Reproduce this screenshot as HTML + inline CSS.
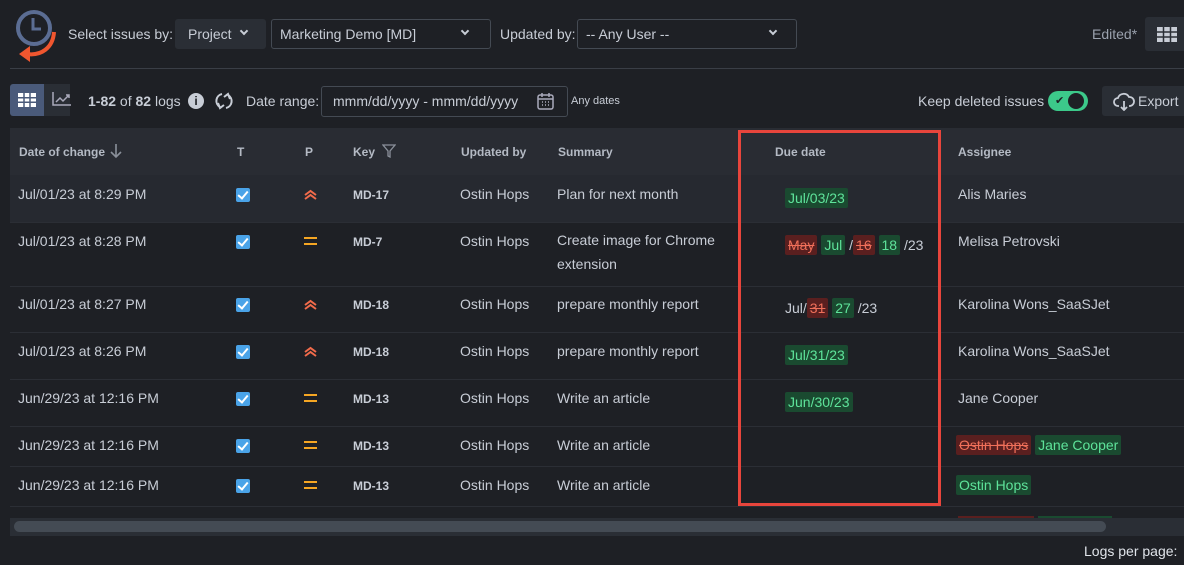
<!DOCTYPE html>
<html><head><meta charset="utf-8"><style>
*{box-sizing:border-box;margin:0;padding:0}
body{width:1184px;height:565px;background:#1e2025;font-family:"Liberation Sans",sans-serif;color:#c8cdd6;font-size:14px;position:relative;overflow:hidden}
.a{position:absolute;white-space:nowrap}
.sel{position:absolute;border:1px solid #444a53;border-radius:3px;height:30px;padding:6px 8px;font-size:14px;color:#c8cdd6}
.chev{position:absolute;right:10px;top:8px;width:6px;height:6px;border-right:2px solid #c8cdd6;border-bottom:2px solid #c8cdd6;transform:rotate(45deg)}
.row{position:absolute;left:10px;width:1174px;border-top:1px solid #2b2e35}
.h{font-size:12px;font-weight:bold;color:#b4bac4}
.cb{position:absolute;width:14px;height:14px;background:#4aa3e8;border-radius:2px}
.cb:after{content:"";position:absolute;left:4px;top:1px;width:4px;height:8px;border-right:2px solid #fff;border-bottom:2px solid #fff;transform:rotate(40deg)}
.eq{position:absolute;width:13px;height:8px;border-top:2px solid #f5a623;border-bottom:2px solid #f5a623}
.hi{position:absolute}
.key{font-size:12px;font-weight:bold;color:#c8cdd6}
.g{background:#1a4a30;color:#5ee39a;padding:2px 3px;border-radius:2px}
.r{background:#5a1f1f;color:#f0705a;padding:2px 3px;border-radius:2px;text-decoration:line-through}
</style></head><body>
<svg class="a" style="left:13px;top:8px" width="46" height="54" viewBox="0 0 46 54"><circle cx="21" cy="20" r="16" fill="none" stroke="#5b6d93" stroke-width="4"/><path d="M20 10v11h8" fill="none" stroke="#5b6d93" stroke-width="3"/><path d="M41 24 C40 40 28 48 14 46" fill="none" stroke="#f0562f" stroke-width="4"/><path d="M6 46 L17 38 L17 54 Z" fill="#f0562f"/></svg>
<div class="a" style="left:68px;top:26px">Select issues by:</div>
<div class="sel" style="left:175px;top:19px;width:91px;background:#2a2e35;border-color:#2a2e35;padding-left:12px">Project<span class="chev" style="right:18px"></span></div>
<div class="sel" style="left:271px;top:19px;width:220px">Marketing Demo [MD]<span class="chev" style="right:22px"></span></div>
<div class="a" style="left:500px;top:26px">Updated by:</div>
<div class="sel" style="left:577px;top:19px;width:220px">-- Any User --<span class="chev" style="right:20px"></span></div>
<div class="a" style="left:1092px;top:26px;color:#9aa1ad">Edited*</div>
<div class="a" style="left:1145px;top:17px;width:45px;height:34px;background:#2a2e35;border-radius:3px"></div>
<svg class="a" style="left:1157px;top:27px" width="20" height="15"><rect x="0" y="0" width="20" height="15" fill="#c8cdd6"/><path d="M0 5h20M0 10h20M6.5 0v15M13.5 0v15" stroke="#2a2e35" stroke-width="1.5"/></svg>
<div class="a" style="left:10px;top:68px;width:1174px;height:1px;background:#3a3e46"></div>
<div class="a" style="left:10px;top:84px;width:34px;height:32px;background:#4a5a7a;border-radius:3px 0 0 3px"></div>
<svg class="a" style="left:18px;top:93px" width="18" height="14"><rect width="18" height="14" fill="#fff"/><path d="M0 4.7h18M0 9.3h18M6 0v14M12 0v14" stroke="#4a5a7a" stroke-width="1.5"/></svg>
<div class="a" style="left:44px;top:84px;width:26px;height:32px;background:#2a2e35"></div>
<svg class="a" style="left:52px;top:91px" width="20" height="16"><path d="M1 1v13h18" fill="none" stroke="#aab" stroke-width="1.5"/><path d="M4 11l4-4 3 3 6-6M14 4h3v3" fill="none" stroke="#aab" stroke-width="1.5"/></svg>
<div class="a" style="left:88px;top:93px"><b>1-82</b> of <b>82</b> logs</div>
<div class="a" style="left:188px;top:93px;width:16px;height:16px;border-radius:50%;background:#c8cdd6;color:#1e2025;font-size:12px;font-weight:bold;text-align:center;line-height:16px">i</div>
<svg class="a" style="left:215px;top:91px" width="18" height="20"><path d="M7 3A7 7 0 0 0 5 16M11 17A7 7 0 0 0 13 4" fill="none" stroke="#c8cdd6" stroke-width="2"/><path d="M3 12l2 5 4-3M15 8l-2-5-4 3" fill="none" stroke="#c8cdd6" stroke-width="2"/></svg>
<div class="a" style="left:246px;top:93px">Date range:</div>
<div class="sel" style="left:321px;top:86px;width:247px;height:31px;padding:6px 11px">mmm/dd/yyyy - mmm/dd/yyyy</div>
<svg class="a" style="left:537px;top:92px" width="17" height="18"><rect x="1" y="3" width="15" height="14" rx="2" fill="none" stroke="#aab" stroke-width="1.5"/><path d="M1 7h15M5 1v4M12 1v4" stroke="#aab" stroke-width="1.5"/><path d="M5 10h1M8 10h1M11 10h1M5 13h1M8 13h1M11 13h1" stroke="#aab" stroke-width="1.5"/></svg>
<div class="a" style="left:571px;top:95px;font-size:11px">Any dates</div>
<div class="a" style="left:918px;top:93px">Keep deleted issues</div>
<div class="a" style="left:1048px;top:91px;width:40px;height:20px;background:#3cc98a;border-radius:10px"></div>
<div class="a" style="left:1068px;top:93px;width:16px;height:16px;background:#1e2025;border-radius:50%"></div>
<div class="a" style="left:1055px;top:94px;font-size:11px;color:#1e2025">✔</div>
<div class="a" style="left:1102px;top:86px;width:90px;height:30px;background:#2a2e35;border-radius:3px"></div>
<svg class="a" style="left:1113px;top:92px" width="22" height="19"><path d="M6 14H5a4 4 0 0 1 0-8 6 6 0 0 1 11-1 4.5 4.5 0 0 1 1 9h-1" fill="none" stroke="#c8cdd6" stroke-width="1.8"/><path d="M11 9v9M8 15l3 3 3-3" fill="none" stroke="#c8cdd6" stroke-width="1.8"/></svg>
<div class="a" style="left:1138px;top:93px">Export</div>
<div class="a" style="left:10px;top:128px;width:1174px;height:47px;background:#292c33"></div>
<div class="a" style="left:10px;top:175px;width:1174px;height:47px;background:#262930"></div>
<div class="a h" style="left:19px;top:145px">Date of change</div>
<svg class="a" style="left:110px;top:143px" width="12" height="16"><path d="M6 1v13M1 9l5 5 5-5" fill="none" stroke="#8a909a" stroke-width="1.6"/></svg>
<div class="a h" style="left:237px;top:145px">T</div>
<div class="a h" style="left:305px;top:145px">P</div>
<div class="a h" style="left:353px;top:145px">Key</div>
<svg class="a" style="left:382px;top:144px" width="14" height="14"><path d="M1 1h12L8 7v6L6 12V7Z" fill="none" stroke="#8a909a" stroke-width="1.3"/></svg>
<div class="a h" style="left:461px;top:145px">Updated by</div>
<div class="a h" style="left:558px;top:145px">Summary</div>
<div class="a h" style="left:775px;top:145px">Due date</div>
<div class="a h" style="left:958px;top:145px">Assignee</div>

<div class="row" style="top:222px"></div><div class="row" style="top:286px"></div><div class="row" style="top:332px"></div><div class="row" style="top:379px"></div><div class="row" style="top:426px"></div><div class="row" style="top:466px"></div><div class="row" style="top:506px"></div>

<div class="a" style="left:18px;top:186px">Jul/01/23 at 8:29 PM</div>
<div class="cb" style="left:236px;top:188px"></div><svg class="hi" style="left:304px;top:189px" width="13" height="11"><path d="M1 6l5.5-4 5.5 4M1 10l5.5-4 5.5 4" fill="none" stroke="#f26b4b" stroke-width="2"/></svg>
<div class="a key" style="left:353px;top:188px">MD-17</div><div class="a" style="left:460px;top:186px">Ostin Hops</div><div class="a" style="left:557px;top:186px">Plan for next month</div>
<div class="a" style="left:785px;top:190px"><span class="g">Jul/03/23</span></div><div class="a" style="left:958px;top:186px">Alis Maries</div>

<div class="a" style="left:18px;top:233px">Jul/01/23 at 8:28 PM</div>
<div class="cb" style="left:236px;top:235px"></div><div class="eq" style="left:304px;top:237px"></div>
<div class="a key" style="left:353px;top:235px">MD-7</div><div class="a" style="left:460px;top:233px">Ostin Hops</div><div class="a" style="left:557px;line-height:24px;top:228px">Create image for Chrome<br>extension</div>
<div class="a" style="left:785px;top:237px"><span class="r">May</span> <span class="g">Jul</span> /<span class="r">16</span> <span class="g">18</span> /23</div><div class="a" style="left:958px;top:233px">Melisa Petrovski</div>

<div class="a" style="left:18px;top:296px">Jul/01/23 at 8:27 PM</div>
<div class="cb" style="left:236px;top:298px"></div><svg class="hi" style="left:304px;top:299px" width="13" height="11"><path d="M1 6l5.5-4 5.5 4M1 10l5.5-4 5.5 4" fill="none" stroke="#f26b4b" stroke-width="2"/></svg>
<div class="a key" style="left:353px;top:298px">MD-18</div><div class="a" style="left:460px;top:296px">Ostin Hops</div><div class="a" style="left:557px;top:296px">prepare monthly report</div>
<div class="a" style="left:785px;top:300px">Jul/<span class="r">31</span> <span class="g">27</span> /23</div><div class="a" style="left:958px;top:296px">Karolina Wons_SaaSJet</div>

<div class="a" style="left:18px;top:343px">Jul/01/23 at 8:26 PM</div>
<div class="cb" style="left:236px;top:345px"></div><svg class="hi" style="left:304px;top:346px" width="13" height="11"><path d="M1 6l5.5-4 5.5 4M1 10l5.5-4 5.5 4" fill="none" stroke="#f26b4b" stroke-width="2"/></svg>
<div class="a key" style="left:353px;top:345px">MD-18</div><div class="a" style="left:460px;top:343px">Ostin Hops</div><div class="a" style="left:557px;top:343px">prepare monthly report</div>
<div class="a" style="left:785px;top:347px"><span class="g">Jul/31/23</span></div><div class="a" style="left:958px;top:343px">Karolina Wons_SaaSJet</div>

<div class="a" style="left:18px;top:390px">Jun/29/23 at 12:16 PM</div>
<div class="cb" style="left:236px;top:392px"></div><div class="eq" style="left:304px;top:394px"></div>
<div class="a key" style="left:353px;top:392px">MD-13</div><div class="a" style="left:460px;top:390px">Ostin Hops</div><div class="a" style="left:557px;top:390px">Write an article</div>
<div class="a" style="left:785px;top:394px"><span class="g">Jun/30/23</span></div><div class="a" style="left:958px;top:390px">Jane Cooper</div>

<div class="a" style="left:18px;top:437px">Jun/29/23 at 12:16 PM</div>
<div class="cb" style="left:236px;top:439px"></div><div class="eq" style="left:304px;top:441px"></div>
<div class="a key" style="left:353px;top:439px">MD-13</div><div class="a" style="left:460px;top:437px">Ostin Hops</div><div class="a" style="left:557px;top:437px">Write an article</div>
<div class="a" style="left:956px;top:437px"><span class="r">Ostin Hops</span> <span class="g">Jane Cooper</span></div>

<div class="a" style="left:18px;top:477px">Jun/29/23 at 12:16 PM</div>
<div class="cb" style="left:236px;top:479px"></div><div class="eq" style="left:304px;top:481px"></div>
<div class="a key" style="left:353px;top:479px">MD-13</div><div class="a" style="left:460px;top:477px">Ostin Hops</div><div class="a" style="left:557px;top:477px">Write an article</div>
<div class="a" style="left:956px;top:477px"><span class="g">Ostin Hops</span></div>

<div class="a" style="left:958px;top:516px;width:76px;height:4px;background:#5a1f1f"></div>
<div class="a" style="left:1038px;top:516px;width:74px;height:4px;background:#1a4a30"></div>
<div class="a" style="left:10px;top:518px;width:1174px;height:18px;background:#2a2e35"></div>
<div class="a" style="left:14px;top:521px;width:1092px;height:11px;background:#444b54;border-radius:6px"></div>
<div class="a" style="left:738px;top:130px;width:203px;height:376px;border:3px solid #e8453c"></div>
<div class="a" style="left:1084px;top:543px;color:#e0e4ea">Logs per page:</div>
</body></html>
